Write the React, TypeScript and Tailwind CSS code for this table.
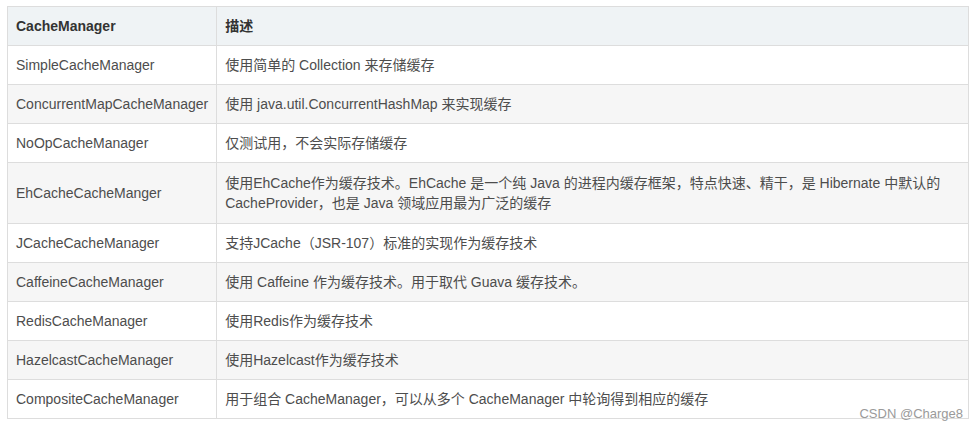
const rows: { name: string; desc: React.ReactNode; tall?: boolean }[] = [
  { name: "SimpleCacheManager", desc: "使用简单的 Collection 来存储缓存" },
  { name: "ConcurrentMapCacheManager", desc: "使用 java.util.ConcurrentHashMap 来实现缓存" },
  { name: "NoOpCacheManager", desc: "仅测试用，不会实际存储缓存" },
  {
    name: "EhCacheCacheManger",
    tall: true,
    desc: (
      <>
        使用EhCache作为缓存技术。EhCache 是一个纯 Java 的进程内缓存框架，特点快速、精干，是 Hibernate 中默认的
        <br />
        CacheProvider，也是 Java 领域应用最为广泛的缓存
      </>
    ),
  },
  { name: "JCacheCacheManager", desc: "支持JCache（JSR-107）标准的实现作为缓存技术" },
  { name: "CaffeineCacheManager", desc: "使用 Caffeine 作为缓存技术。用于取代 Guava 缓存技术。" },
  { name: "RedisCacheManager", desc: "使用Redis作为缓存技术" },
  { name: "HazelcastCacheManager", desc: "使用Hazelcast作为缓存技术" },
  { name: "CompositeCacheManager", desc: "用于组合 CacheManager，可以从多个 CacheManager 中轮询得到相应的缓存" },
];

export default function App() {
  return (
    <div
      className="relative w-[979px] h-[429px] bg-white pt-[6px] pl-[7px]"
      style={{ fontFamily: '"Liberation Sans", Arial, "Noto Sans CJK SC", sans-serif' }}
    >
      <table className="w-[962px] border-collapse text-[14px] leading-[20px] text-[#4d4d4d]">
        <thead>
          <tr className="bg-[#eff3f5]">
            <th className="w-[209px] border border-[#dddddd] px-[8px] py-[9px] text-left font-bold text-[#333333]">
              CacheManager
            </th>
            <th className="border border-[#dddddd] px-[8px] py-[9px] text-left font-bold text-[#333333]">
              描述
            </th>
          </tr>
        </thead>
        <tbody>
          {rows.map((r, i) => {
            const pad = r.tall ? "pt-[10px] pb-[10px]" : "py-[9px]";
            return (
              <tr key={r.name} className={i % 2 === 1 ? "bg-[#f6f6f6]" : "bg-white"}>
                <td className={`border border-[#dddddd] px-[8px] ${pad} align-middle`}>{r.name}</td>
                <td className={`border border-[#dddddd] px-[8px] ${pad} align-middle`}>{r.desc}</td>
              </tr>
            );
          })}
        </tbody>
      </table>

      {/* watermark */}
      <span className="absolute right-[16px] top-[406px] text-[13px] leading-[16px] text-[#9a9a9a]">
        CSDN @Charge8
      </span>
    </div>
  );
}
